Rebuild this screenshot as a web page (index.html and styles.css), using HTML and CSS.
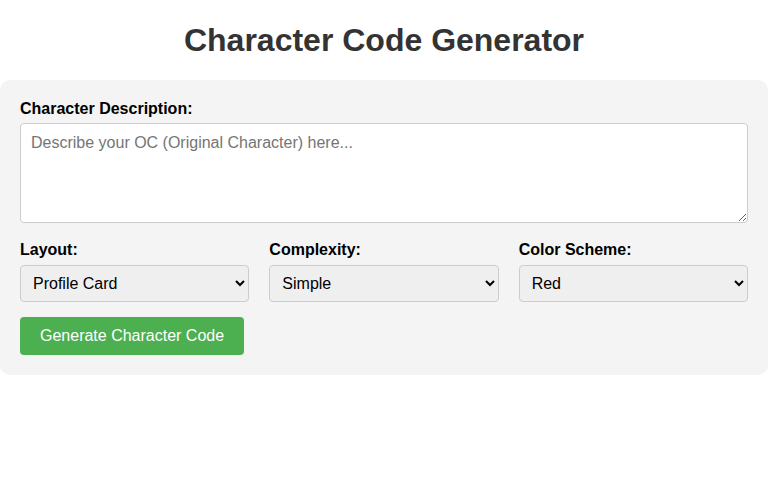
FILE: index.html
```html
<!DOCTYPE html>
<html lang="en">
  <head>
    <meta charset="UTF-8" />
    <meta name="viewport" content="width=device-width, initial-scale=1.0" />
    <title>Character Code Generator</title>
    <link rel="stylesheet" href="styles.css">
  </head>
  <body>
    <h1>Character Code Generator</h1>
    <form class="container" id="charForm">
      <div class="form-group">
        <label for="description">Character Description:</label>
        <textarea
          id="description"
          name="description"
          placeholder="Describe your OC (Original Character) here..."
        ></textarea>
      </div>

      <div class="options">
        <div class="option">
          <label for="layout">Layout:</label>
          <select id="layout" name="layout">
            <option value="profile">Profile Card</option>
            <option value="wiki">Wiki Page</option>
            <option value="sheet">Character Sheet</option>
          </select>
        </div>
        <div class="option">
          <label for="complexity">Complexity:</label>
          <select id="complexity" name="complexity">
            <option value="simple">Simple</option>
            <option value="medium">Medium</option>
            <option value="detailed">Detailed</option>
          </select>
        </div>
        <div class="option">
          <label for="colors">Color Scheme:</label>
          <select id="colors" name="colors">
            <option value="red">Red</option>
            <option value="blue">Blue</option>
            <option value="green">Green</option>
            <option value="purple">Purple</option>
          </select>
        </div>
      </div>

      <button type="submit" class="generate">Generate Character Code</button>
    </form>
  </body>
</html>
```

FILE: styles.css
```css
body {
  font-family: "Liberation Sans", Arial, sans-serif;
  margin: 0;
  color: #333;
}

h1 {
  text-align: center;
  font-size: 32px;
  margin: 21px 0;
  line-height: 38px;
}

.container {
  background-color: #f4f4f4;
  border-radius: 10px;
  padding: 20px;
}

label {
  display: block;
  font-weight: bold;
  color: black;
  margin-bottom: 5px;
  line-height: 18px;
}

textarea {
  display: block;
  box-sizing: border-box;
  width: 100%;
  height: 100px;
  padding: 10px;
  border: 1px solid #ccc;
  border-radius: 4px;
  font-family: inherit;
  font-size: 16px;
}

.form-group {
  margin-bottom: 18px;
}

.options {
  display: grid;
  grid-template-columns: repeat(3, 1fr);
  gap: 20px;
  margin-bottom: 15px;
}

.option label {
  margin-bottom: 6px;
}

select {
  width: 100%;
  height: 37px;
  padding: 8px;
  border: 1px solid #ccc;
  border-radius: 4px;
  font-family: inherit;
  font-size: 16px;
  color: black;
}

.generate {
  background-color: #4caf50;
  color: white;
  border: none;
  border-radius: 4px;
  padding: 10px 20px;
  font-family: inherit;
  font-size: 16px;
  line-height: 18px;
  cursor: pointer;
}

.generate:hover {
  background-color: #45a049;
}
```
